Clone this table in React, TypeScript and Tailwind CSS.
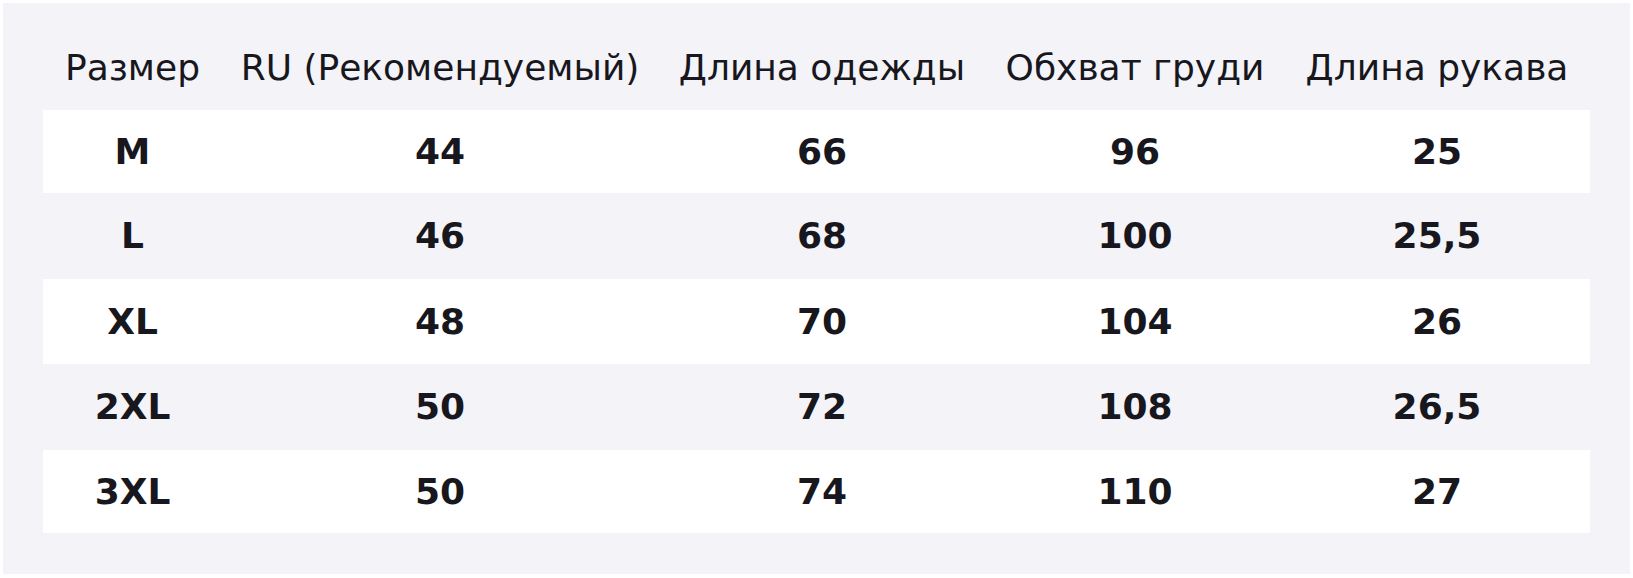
const headers = ['Размер', 'RU (Рекомендуемый)', 'Длина одежды', 'Обхват груди', 'Длина рукава'];

const rows = [
  { cells: ['M', '44', '66', '96', '25'], white: true, h: 'h-[83px]' },
  { cells: ['L', '46', '68', '100', '25,5'], white: false, h: 'h-[86px]' },
  { cells: ['XL', '48', '70', '104', '26'], white: true, h: 'h-[85px]' },
  { cells: ['2XL', '50', '72', '108', '26,5'], white: false, h: 'h-[86px]' },
  { cells: ['3XL', '50', '74', '110', '27'], white: true, h: 'h-[83px]' },
];

const cols = 'grid grid-cols-[179px_436px_328px_298px_306px]';

export default function App() {
  return (
    <div className="min-h-[578px] bg-white pt-[3px] px-[3px] pb-[4px]">
      <div
        className="bg-[#f3f3f8] px-10 pt-10 pb-[41px] text-[#17171d]"
        style={{ fontFamily: '"DejaVu Sans", "Noto Sans", sans-serif' }}
      >
        {/* header */}
        <div className={`${cols} h-[67px] items-start pt-1`}>
          {headers.map((h) => (
            <div key={h} className="text-center text-[36px] leading-[42px] whitespace-nowrap">
              {h}
            </div>
          ))}
        </div>

        {rows.map((row) => (
          <div
            key={row.cells[0]}
            className={`${cols} ${row.h} items-center ${row.white ? 'bg-white' : ''}`}
          >
            {row.cells.map((c, i) => (
              <div key={i} className="text-center text-[36px] leading-[42px] font-bold whitespace-nowrap">
                {c}
              </div>
            ))}
          </div>
        ))}
      </div>
    </div>
  );
}
